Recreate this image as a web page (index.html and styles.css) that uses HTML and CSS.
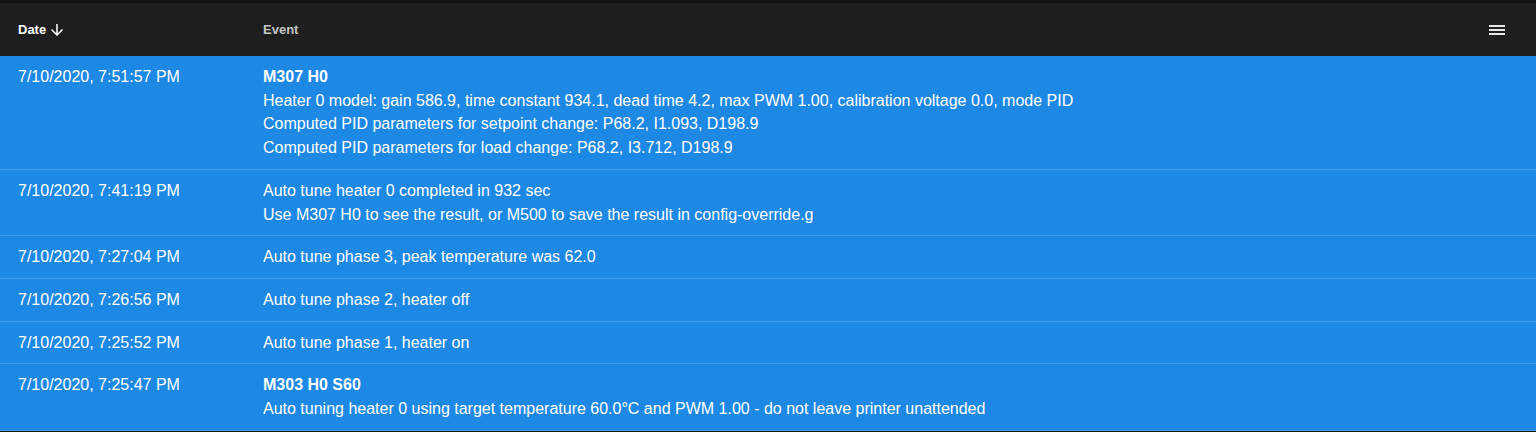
FILE: index.html
```html
<!DOCTYPE html>
<html>
<head>
<meta charset="utf-8">
<link rel="stylesheet" href="styles.css">
</head>
<body>
<div class="table">
  <div class="head">
    <div class="th th-date">Date
      <svg class="sort" viewBox="0 0 24 24" width="18" height="18"><path d="M20 12l-1.41-1.41L13 16.17V4h-2v12.17l-5.58-5.59L4 12l8 8 8-8z" fill="#fff"/></svg>
    </div>
    <div class="th th-event">Event</div>
    <div class="th th-menu">
      <svg viewBox="0 0 16 10" width="16" height="10"><rect x="0" y="0" width="16" height="2" fill="#e8e8e8"/><rect x="0" y="4" width="16" height="2" fill="#e8e8e8"/><rect x="0" y="8" width="16" height="2" fill="#e8e8e8"/></svg>
    </div>
  </div>
  <div class="row">
    <div class="td td-date">7/10/2020, 7:51:57 PM</div>
    <div class="td td-event"><strong>M307 H0</strong><br>Heater 0 model: gain 586.9, time constant 934.1, dead time 4.2, max PWM 1.00, calibration voltage 0.0, mode PID<br>Computed PID parameters for setpoint change: P68.2, I1.093, D198.9<br>Computed PID parameters for load change: P68.2, I3.712, D198.9</div>
  </div>
  <div class="row">
    <div class="td td-date">7/10/2020, 7:41:19 PM</div>
    <div class="td td-event">Auto tune heater 0 completed in 932 sec<br>Use M307 H0 to see the result, or M500 to save the result in config-override.g</div>
  </div>
  <div class="row">
    <div class="td td-date">7/10/2020, 7:27:04 PM</div>
    <div class="td td-event">Auto tune phase 3, peak temperature was 62.0</div>
  </div>
  <div class="row">
    <div class="td td-date">7/10/2020, 7:26:56 PM</div>
    <div class="td td-event">Auto tune phase 2, heater off</div>
  </div>
  <div class="row">
    <div class="td td-date">7/10/2020, 7:25:52 PM</div>
    <div class="td td-event">Auto tune phase 1, heater on</div>
  </div>
  <div class="row">
    <div class="td td-date">7/10/2020, 7:25:47 PM</div>
    <div class="td td-event"><strong>M303 H0 S60</strong><br>Auto tuning heater 0 using target temperature 60.0°C and PWM 1.00 - do not leave printer unattended</div>
  </div>
</div>
</body>
</html>
```
FILE: styles.css
```css
html, body {
  margin: 0;
  padding: 0;
  background: #121212;
  height: 432px;
  overflow: hidden;
}
.table {
  padding-top: 3px;
  font-family: "Liberation Sans", Arial, sans-serif;
  color: #fff;
}
.head {
  display: flex;
  align-items: center;
  height: 53px;
  background: #1e1e1e;
  font-size: 13px;
  font-weight: bold;
}
.th {
  padding: 0 18px;
}
.th-date {
  width: 209px;
  display: flex;
  align-items: center;
  color: #fff;
}
.sort {
  margin-left: 2px;
}
.th-event {
  flex: 1;
  color: #c4c4c4;
}
.th-menu {
  padding: 0 31px 0 0;
  display: flex;
  align-items: center;
}
.row {
  display: flex;
  background: #1e88e5;
  border-bottom: 1px solid #4a9de9;
  font-size: 16px;
  line-height: 23.7px;
}
.td {
  padding: 9px 18px 9px 18px;
}
.td-date {
  width: 209px;
  flex: none;
}
.td-event {
  flex: 1;
}
strong {
  font-weight: bold;
}
```
